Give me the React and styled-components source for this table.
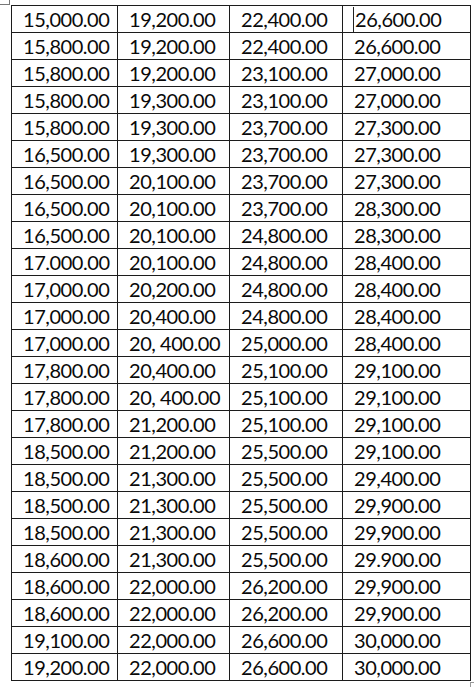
import React from 'react'
import styled, { createGlobalStyle } from 'styled-components'

const GlobalStyle = createGlobalStyle`
  html, body {
    margin: 0;
    padding: 0;
    background: #fff;
  }
`

const Page = styled.div`
  position: relative;
  width: 474px;
  height: 687px;
  padding: 5px 0 0 11px;
  box-sizing: border-box;
  overflow: hidden;
`

const MoveHandle = styled.div`
  position: absolute;
  left: 0;
  top: 0;
  width: 9px;
  height: 4px;
  border-right: 1px solid #777;
  border-bottom: 1px solid #777;
`

const ResizeHandle = styled.div`
  position: absolute;
  left: 470px;
  top: 682px;
  width: 5px;
  height: 6px;
  border-left: 1px solid #999;
  border-top: 1px solid #999;
`

const Table = styled.table`
  border-collapse: collapse;
  table-layout: fixed;
  width: 459px;
`

const Cell = styled.td`
  width: ${p => p.w}px;
  height: 26px;
  padding: 1px 0 0 11px;
  border: 1px solid #1c1c1c;
  box-sizing: border-box;
  font-family: Lato, "Open Sans", sans-serif;
  font-size: 20px;
  letter-spacing: -0.45px;
  line-height: 25px;
  color: #0a0a0a;
  white-space: nowrap;
  overflow: hidden;
`

const Caret = styled.span`
  display: inline-block;
  width: 1px;
  height: 25px;
  margin-right: 1px;
  margin-left: -1px;
  vertical-align: top;
  background: #222;
`

const widths = [106, 112, 113, 128]

const rows = [
  ['15,000.00', '19,200.00', '22,400.00', '26,600.00'],
  ['15,800.00', '19,200.00', '22,400.00', '26,600.00'],
  ['15,800.00', '19,200.00', '23,100.00', '27,000.00'],
  ['15,800.00', '19,300.00', '23,100.00', '27,000.00'],
  ['15,800.00', '19,300.00', '23,700.00', '27,300.00'],
  ['16,500.00', '19,300.00', '23,700.00', '27,300.00'],
  ['16,500.00', '20,100.00', '23,700.00', '27,300.00'],
  ['16,500.00', '20,100.00', '23,700.00', '28,300.00'],
  ['16,500.00', '20,100.00', '24,800.00', '28,300.00'],
  ['17.000.00', '20,100.00', '24,800.00', '28,400.00'],
  ['17,000.00', '20,200.00', '24,800.00', '28,400.00'],
  ['17,000.00', '20,400.00', '24,800.00', '28,400.00'],
  ['17,000.00', '20, 400.00', '25,000.00', '28,400.00'],
  ['17,800.00', '20,400.00', '25,100.00', '29,100.00'],
  ['17,800.00', '20, 400.00', '25,100.00', '29,100.00'],
  ['17,800.00', '21,200.00', '25,100.00', '29,100.00'],
  ['18,500.00', '21,200.00', '25,500.00', '29,100.00'],
  ['18,500.00', '21,300.00', '25,500.00', '29,400.00'],
  ['18,500.00', '21,300.00', '25,500.00', '29,900.00'],
  ['18,500.00', '21,300.00', '25,500.00', '29,900.00'],
  ['18,600.00', '21,300.00', '25,500.00', '29.900.00'],
  ['18,600.00', '22,000.00', '26,200.00', '29,900.00'],
  ['18,600.00', '22,000.00', '26,200.00', '29,900.00'],
  ['19,100.00', '22,000.00', '26,600.00', '30,000.00'],
  ['19,200.00', '22,000.00', '26,600.00', '30,000.00'],
]

export default function App() {
  return (
    <>
      <GlobalStyle />
      <Page>
        <MoveHandle />
        <Table>
          <tbody>
            {rows.map((row, r) => (
              <tr key={r}>
                {row.map((val, c) => (
                  <Cell key={c} w={widths[c]}>
                    {r === 0 && c === 3 && <Caret />}
                    {val}
                  </Cell>
                ))}
              </tr>
            ))}
          </tbody>
        </Table>
        <ResizeHandle />
      </Page>
    </>
  )
}
